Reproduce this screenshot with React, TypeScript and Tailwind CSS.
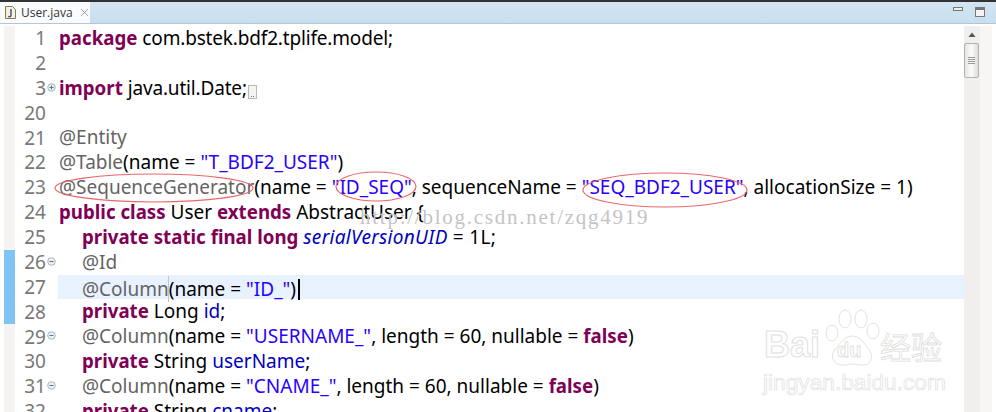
import type { ReactNode } from 'react';

const K = ({ children }: { children: ReactNode }) => <span className="text-[18.7px] font-bold text-[#7f0055]">{children}</span>;
const S = ({ children }: { children: ReactNode }) => <span className="text-[#2a00ff]">{children}</span>;
const A = ({ children }: { children: ReactNode }) => <span className="text-[#646464]">{children}</span>;
const F = ({ children }: { children: ReactNode }) => <span className="text-[#0000c0]">{children}</span>;

type Row = { n: number; fold?: 'plus' | 'minus'; mark?: boolean; active?: boolean; indent?: boolean; code?: ReactNode };

const rows: Row[] = [
  { n: 1, code: <><K>package</K> <span className="tracking-[-0.17px]">com.bstek.bdf2.tplife.model;</span></> },
  { n: 2 },
  { n: 3, fold: 'plus', code: <><K>import</K> <span className="tracking-[-0.17px]">java.util.Date;</span><span className="ml-[1px] inline-flex h-[14px] w-[9px] translate-y-[2px] items-end justify-center gap-[1px] border border-[#b8b8b8] bg-[#f4f4f4] pb-[1px]"><span className="h-[1px] w-[1px] bg-[#777]" /><span className="h-[1px] w-[1px] bg-[#777]" /></span></> },
  { n: 20 },
  { n: 21, code: <A>@Entity</A> },
  { n: 22, code: <><A>@Table</A>(name = <S>"T_BDF2_USER"</S>)</> },
  { n: 23, code: <><A>@SequenceGenerator</A>(name = <S>"ID_SEQ"</S>, sequenceName = <S>"SEQ_BDF2_USER"</S>, allocationSize = 1)</> },
  { n: 24, code: <><K>public class</K> User <K>extends</K> AbstractUser {'{'}</> },
  { n: 25, indent: true, code: <><K>private static final long</K> <span className="italic tracking-[0.3px] text-[#0000c0]">serialVersionUID</span> <span className="tracking-[0.4px]">= 1L;</span></> },
  { n: 26, fold: 'minus', mark: true, indent: true, code: <A>@Id</A> },
  { n: 27, mark: true, active: true, indent: true, code: <><A>@Column</A><span className="-ml-[1px] border-l border-[#c4c4c4]">(</span>name = <S>"ID_"</S>)<span className="ml-[2px] inline-block h-[21px] w-[2px] translate-y-[4px] bg-black" /></> },
  { n: 28, mark: true, indent: true, code: <><K>private</K> Long <F>id</F>;</> },
  { n: 29, fold: 'minus', indent: true, code: <><A>@Column</A>(name = <S>"USERNAME_"</S>, length = 60, nullable = <K>false</K>)</> },
  { n: 30, indent: true, code: <><K>private</K> String <F>userName</F>;</> },
  { n: 31, fold: 'minus', indent: true, code: <><A>@Column</A>(name = <S>"CNAME_"</S>, length = 60, nullable = <K>false</K>)</> },
  { n: 32, indent: true, code: <><K>private</K> String <F>cname</F>;</> },
];

function Fold({ kind }: { kind: 'plus' | 'minus' }) {
  return (
    <svg width="9" height="9" viewBox="0 0 9 9" className="absolute left-[47px] top-[7px]">
      <circle cx="4.5" cy="4.5" r="3.8" fill="#e8eef2" stroke="#a9b6bf" strokeWidth="1" />
      <path d={kind === 'plus' ? 'M2.5 4.5h4M4.5 2.5v4' : 'M2.5 4.5h4'} stroke="#5f7585" strokeWidth="1" />
    </svg>
  );
}

function CodeRow({ r }: { r: Row }) {
  return (
    <div className="relative flex h-[24.86px] shrink-0 items-center">
      <div className={`ml-[4px] h-full w-[11px] shrink-0 ${r.mark ? 'bg-[#7fc4f2]' : 'bg-[#f6f4f1]'}`} />
      <div className="w-[31px] shrink-0 text-right text-[#787878]">{r.n}</div>
      {r.fold && <Fold kind={r.fold} />}
      <div className={`ml-[12px] h-full flex-1 whitespace-pre leading-[24.86px] text-black ${r.active ? 'bg-[#e8f2fe]' : ''} ${r.indent ? 'pl-[24px]' : 'pl-[1px]'}`}>
        {r.code}
      </div>
    </div>
  );
}

function Scrollbar() {
  return (
    <div className="relative mt-[2px] w-[16px] shrink-0 bg-[#f0efed]">
      <svg width="8" height="6" viewBox="0 0 8 6" className="absolute left-[4px] top-[6px]">
        <path d="M4 0.5 7.5 5H0.5Z" fill="#555" />
      </svg>
      <div className="absolute left-[0px] top-[17px] flex h-[35px] w-[15px] flex-col items-center justify-center gap-[1px] rounded-[2px] border border-[#b5b3ae] bg-gradient-to-r from-[#e6e5e2] via-[#fbfbfa] to-[#dcdbd7]">
        <div className="h-[1px] w-[7px] bg-[#9b9a96]" />
        <div className="h-[1px] w-[7px] bg-[#9b9a96]" />
        <div className="h-[1px] w-[7px] bg-[#9b9a96]" />
        <div className="h-[1px] w-[7px] bg-[#9b9a96]" />
      </div>
    </div>
  );
}

function Watermark() {
  return (
    <div className="pointer-events-none absolute left-[762px] top-[314px] h-[92px] w-[184px]">
      <span className="absolute left-[2px] top-[9px] text-[36px] font-bold leading-[44px] text-transparent [-webkit-text-stroke:1px_#e0e0de] [font-family:'Liberation_Sans',sans-serif]">Bai</span>
      <svg width="56" height="62" viewBox="0 0 56 62" className="absolute left-[62px] top-[-6px]" fill="none" stroke="#e2e2e0" strokeWidth="1">
        <ellipse cx="21" cy="11" rx="6" ry="9" />
        <ellipse cx="37" cy="11" rx="6" ry="9" />
        <ellipse cx="8" cy="25" rx="6" ry="8" />
        <ellipse cx="49" cy="23" rx="6" ry="8" />
        <path d="M28 28c8 0 13 8 18 15 4 7 0 15-8 14-4 0-7-1-10-1s-7 2-11 1c-7-1-11-7-7-14 5-6 10-15 18-15Z" />
      </svg>
      <span className="absolute left-[75px] top-[24px] text-[20px] font-bold leading-[24px] text-transparent [-webkit-text-stroke:0.8px_#dededc] [font-family:'Liberation_Sans',sans-serif]">du</span>
      <span className="absolute left-[118px] top-[14px] whitespace-nowrap text-[31px] leading-[36px] text-transparent [-webkit-text-stroke:0.8px_#dededc] [font-family:'Noto_Sans_CJK_SC',sans-serif]">经验</span>
      <span className="absolute left-[1px] top-[54px] whitespace-nowrap text-[22.7px] leading-[28px] text-transparent [-webkit-text-stroke:0.7px_#e0e0de] [font-family:'Liberation_Sans',sans-serif]">jingyan.baidu.com</span>
    </div>
  );
}

export default function App() {
  return (
    <div className="relative flex h-[412px] w-[996px] flex-col overflow-hidden bg-white text-[19px] [font-family:'Noto_Sans','Noto_Sans_CJK_SC',sans-serif]">
      <div className="h-[2px] shrink-0 bg-[#333333]" />
      {/* tab bar */}
      <div className="flex h-[22px] shrink-0 items-stretch border-b border-[#b4c6d6] bg-gradient-to-b from-[#d3e5f2] to-[#c7dfef]">
        <div className="flex w-[90px] shrink-0 items-center bg-[#fafbfc] pl-[5px] text-[12px] text-[#333]">
          <svg width="11" height="13" viewBox="0 0 11 13">
            <path d="M0.5 0.5h7l3 3v9h-10Z" fill="#f5efdc" stroke="#8a7a50" />
            <path d="M6 3v6.5c0 1.5-2 1.5-2.8.8" fill="none" stroke="#3b5f9a" strokeWidth="1.5" />
          </svg>
          <span className="ml-[5px] [font-family:'Open_Sans',sans-serif]">User.java</span>
          <svg width="9" height="9" viewBox="0 0 9 9" className="ml-[7px]" fill="none" stroke="#a8a8a8">
            <path d="M1 1l7 7M8 1 1 8" />
          </svg>
        </div>
        <div className="flex-1" />
        <div className="flex items-start pr-[11px] pt-[5px]">
          <div className="h-[4px] w-[10px] border border-[#777] bg-[#eee]" />
          <div className="ml-[12px] h-[10px] w-[10px] border border-[#777] border-t-[3px] bg-[#f4f4f4]" />
        </div>
      </div>
      {/* editor */}
      <div className="flex min-h-0 flex-1">
        <div className="min-w-0 flex-1 pt-[2px]">
          {rows.map((r) => <CodeRow key={r.n} r={r} />)}
        </div>
        <Scrollbar />
        <div className="mt-[2px] mr-[4px] w-[12px] shrink-0 bg-[#f7f6f4]" />
      </div>
      {/* annotations */}
      <svg width="996" height="412" viewBox="0 0 996 412" className="pointer-events-none absolute left-0 top-0" fill="none" stroke="#e8686a" strokeWidth="1.2">
        <ellipse cx="154" cy="188" rx="99" ry="14" />
        <ellipse cx="376" cy="186.5" rx="40" ry="14.5" />
        <ellipse cx="665" cy="190" rx="82" ry="17" />
      </svg>
      <div className="pointer-events-none absolute left-[360px] top-[205px] whitespace-nowrap text-[21px] leading-[24px] tracking-[1.75px] text-[#c4c4c4] [font-family:'Liberation_Serif',serif]">http://blog.csdn.net/zqg4919</div>
      <Watermark />
    </div>
  );
}
